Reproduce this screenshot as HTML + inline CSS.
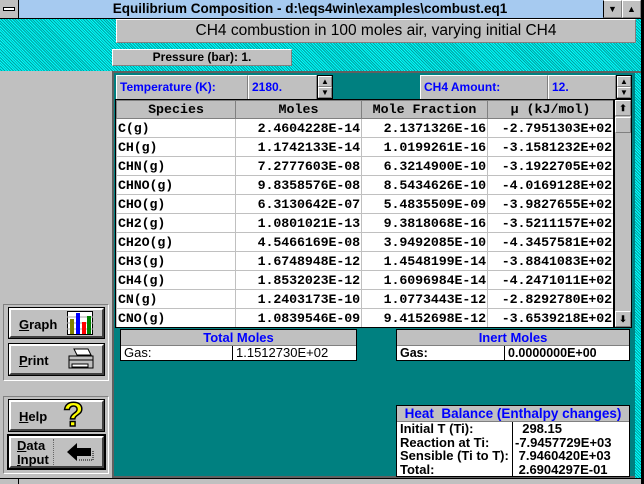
<!DOCTYPE html>
<html><head><style>
*{margin:0;padding:0;box-sizing:border-box}
body{width:644px;height:484px;overflow:hidden;background:#c0c0c0;position:relative;font-family:"Liberation Sans",sans-serif;font-weight:bold;font-size:12px}
.a{position:absolute}
.dither{background-color:#00c0c0;background-image:repeating-linear-gradient(45deg,#00ffff 0 1px,#00a0a0 1px 2px)}
.box{background:#c0c0c0;border:1px solid #fff;border-right-color:#808080;border-bottom-color:#808080}
.lbl{color:#0000ff;font-size:12px;line-height:23px;padding-left:3px}
.spin{background:#c0c0c0;border:1px solid #000}
.spin div{height:11px;border:1px solid #fff;border-right-color:#808080;border-bottom-color:#808080;font-size:8px;text-align:center;line-height:9px}
table{border-collapse:collapse;font-family:"Liberation Mono",monospace;font-size:13.3px;font-weight:bold}
td{height:19px;border:1px solid #c0c0c0;background:#fff;padding:0 1px;white-space:nowrap;letter-spacing:-0.1px}
th{height:18px;background:#c0c0c0;border:1px solid #808080;font-weight:bold}
td.r{text-align:right}
.hdr{background:#c0c0c0;color:#0000ff;text-align:center;height:16px;line-height:16px;border-bottom:1px solid #808080}
.btn{background:#c0c0c0;border:2px solid;border-color:#fff #404040 #404040 #fff;outline:1px solid #000}
.grp{border:1px solid;border-color:#808080 #fff #fff #808080;background:#c0c0c0}
</style></head><body>
<div class="a" style="left:0;top:0;width:644px;height:19px;background:#a6caf0;border-bottom:1px solid #000"></div>
<div class="a" style="left:0;top:0;width:19px;height:18px;background:#c0c0c0;border-right:1px solid #000"><div style="margin:7px 3px;height:4px;border:1px solid #000;background:#fff"></div></div>
<div class="a" style="left:0;top:1px;width:620px;text-align:center;font-size:13.5px;line-height:16px">Equilibrium Composition - d:\eqs4win\examples\combust.eq1</div>
<div class="a box" style="left:603px;top:0;width:19px;height:18px;font-size:9px;text-align:center;line-height:16px;border-left:1px solid #000">▼</div>
<div class="a box" style="left:622px;top:0;width:19px;height:18px;font-size:9px;text-align:center;line-height:16px">▲</div>
<div class="a" style="left:641px;top:0;width:3px;height:484px;background:#000"></div>
<div class="a dither" style="left:0;top:19px;width:641px;height:52px"></div>
<div class="a box" style="left:116px;top:19px;width:520px;height:24px;font-size:15.5px;text-align:center;line-height:22px;font-weight:normal">CH4 combustion in 100 moles air, varying initial CH4</div>
<div class="a box" style="left:112px;top:49px;width:180px;height:17px;text-align:center;line-height:15px">Pressure (bar): 1.</div>
<div class="a" style="left:112px;top:71px;width:529px;height:407px;background:#008080;border:2px solid #606060;border-right:none"></div>
<div class="a dither" style="left:635px;top:73px;width:6px;height:405px"></div>
<div class="a box lbl" style="left:116px;top:75px;width:132px;height:25px">Temperature (K):</div>
<div class="a box lbl" style="left:248px;top:75px;width:69px;height:25px">2180.</div>
<div class="a spin" style="left:317px;top:75px;width:16px;height:24px"><div>▲</div><div>▼</div></div>
<div class="a box lbl" style="left:420px;top:75px;width:128px;height:25px">CH4 Amount:</div>
<div class="a box lbl" style="left:548px;top:75px;width:68px;height:25px">12.</div>
<div class="a spin" style="left:616px;top:75px;width:16px;height:24px"><div>▲</div><div>▼</div></div>
<div class="a" style="left:115px;top:99px;width:499px;height:229px;background:#fff;border:1px solid #000;overflow:hidden">
<table style="width:498px;table-layout:fixed">
<tr><th style="width:119px">Species</th><th style="width:126px">Moles</th><th style="width:126px">Mole Fraction</th><th>μ (kJ/mol)</th></tr>
<tr><td>C(g)</td><td class="r">2.4604228E-14</td><td class="r">2.1371326E-16</td><td class="r">-2.7951303E+02</td></tr>
<tr><td>CH(g)</td><td class="r">1.1742133E-14</td><td class="r">1.0199261E-16</td><td class="r">-3.1581232E+02</td></tr>
<tr><td>CHN(g)</td><td class="r">7.2777603E-08</td><td class="r">6.3214900E-10</td><td class="r">-3.1922705E+02</td></tr>
<tr><td>CHNO(g)</td><td class="r">9.8358576E-08</td><td class="r">8.5434626E-10</td><td class="r">-4.0169128E+02</td></tr>
<tr><td>CHO(g)</td><td class="r">6.3130642E-07</td><td class="r">5.4835509E-09</td><td class="r">-3.9827655E+02</td></tr>
<tr><td>CH2(g)</td><td class="r">1.0801021E-13</td><td class="r">9.3818068E-16</td><td class="r">-3.5211157E+02</td></tr>
<tr><td>CH2O(g)</td><td class="r">4.5466169E-08</td><td class="r">3.9492085E-10</td><td class="r">-4.3457581E+02</td></tr>
<tr><td>CH3(g)</td><td class="r">1.6748948E-12</td><td class="r">1.4548199E-14</td><td class="r">-3.8841083E+02</td></tr>
<tr><td>CH4(g)</td><td class="r">1.8532023E-12</td><td class="r">1.6096984E-14</td><td class="r">-4.2471011E+02</td></tr>
<tr><td>CN(g)</td><td class="r">1.2403173E-10</td><td class="r">1.0773443E-12</td><td class="r">-2.8292780E+02</td></tr>
<tr><td>CNO(g)</td><td class="r">1.0839546E-09</td><td class="r">9.4152698E-12</td><td class="r">-3.6539218E+02</td></tr>
</table></div>
<div class="a" style="left:614px;top:99px;width:18px;height:229px;background:#c0c0c0;border:1px solid #000"></div>
<div class="a box" style="left:615px;top:100px;width:16px;height:16px;font-size:9px;text-align:center;line-height:14px">⬆</div>
<div class="a box" style="left:615px;top:117px;width:16px;height:16px"></div>
<div class="a box" style="left:615px;top:311px;width:16px;height:16px;font-size:9px;text-align:center;line-height:14px">⬇</div>
<div class="a" style="left:120px;top:329px;width:237px;height:32px;border:1px solid #000;background:#fff">
<div class="hdr" style="font-size:13px">Total Moles</div>
<div style="display:flex;font-size:13px;line-height:14px;font-weight:normal"><div style="width:112px;border-right:1px solid #000;padding-left:3px">Gas:</div><div style="padding-left:3px">1.1512730E+02</div></div></div>
<div class="a" style="left:396px;top:329px;width:234px;height:32px;border:1px solid #000;background:#fff">
<div class="hdr" style="font-size:13px">Inert Moles</div>
<div style="display:flex;font-size:12.5px;line-height:14px"><div style="width:108px;border-right:1px solid #000;padding-left:3px">Gas:</div><div style="padding-left:3px">0.0000000E+00</div></div></div>
<div class="a" style="left:396px;top:405px;width:234px;height:72px;border:1px solid #000;background:#fff">
<div class="hdr" style="font-size:13.5px">Heat &nbsp;Balance (Enthalpy changes)</div>
<div style="display:flex;font-size:13px;line-height:13.5px"><div style="width:116px;border-right:1px solid #000;padding-left:3px;height:54px">Initial T (Ti):<br>Reaction at Ti:<br>Sensible (Ti to T):<br>Total:</div><div style="padding-left:2px">&nbsp;&nbsp;298.15<br>-7.9457729E+03<br>&nbsp;7.9460420E+03<br>&nbsp;2.6904297E-01</div></div></div>
<div class="a grp" style="left:3px;top:304px;width:106px;height:77px"></div>
<div class="a btn" style="left:9px;top:308px;width:95px;height:30px"><span class="a" style="left:8px;top:7px;font-size:13px"><u>G</u>raph</span>
<svg class="a" style="left:56px;top:1px" width="26" height="24"><rect x="0.5" y="0.5" width="25" height="23" fill="#fff" stroke="#000"/><path d="M0 6H26M0 12H26M0 18H26" stroke="#aaa"/><rect x="3" y="8" width="4" height="15" fill="#808000"/><rect x="9" y="2" width="4" height="21" fill="#0000ff"/><rect x="15" y="11" width="4" height="12" fill="#ff0000"/><rect x="20" y="5" width="4" height="18" fill="#008000"/></svg></div>
<div class="a btn" style="left:9px;top:344px;width:95px;height:31px"><span class="a" style="left:8px;top:7px;font-size:13px"><u>P</u>rint</span>
<svg class="a" style="left:56px;top:2px" width="28" height="24"><path d="M7 1h14l3 6H10z" fill="#fff" stroke="#000"/><rect x="2" y="8" width="24" height="12" fill="#c0c0c0" stroke="#000"/><path d="M2 12h24" stroke="#000"/><rect x="5" y="16" width="16" height="3" fill="#fff" stroke="#000"/></svg></div>
<div class="a grp" style="left:3px;top:396px;width:106px;height:78px"></div>
<div class="a btn" style="left:9px;top:400px;width:95px;height:31px"><span class="a" style="left:8px;top:7px;font-size:13px"><u>H</u>elp</span>
<span class="a" style="left:52px;top:-6px;font-size:34px;color:#ffff00;-webkit-text-stroke:1.5px #000;font-family:'Liberation Sans'">?</span></div>
<div class="a btn" style="left:9px;top:436px;width:95px;height:32px;outline:2px solid #000"><span class="a" style="left:6px;top:1px;font-size:13px;line-height:14px"><u>D</u>ata<br><u>I</u>nput</span>
<div class="a" style="left:42px;top:1px;height:26px;border-left:1px dotted #666"></div>
<svg class="a" style="left:54px;top:2px" width="30" height="24"><path d="M2 12L12 3v5h14v8H12v5z" fill="#000"/><path d="M14 20h14V10" stroke="#000" fill="none" stroke-dasharray="1 1"/></svg></div>
<div class="a" style="left:0;top:478px;width:641px;height:6px;background:#c0c0c0;border-top:1px solid #000"></div>
<div class="a" style="left:18px;top:479px;width:1px;height:5px;background:#000"></div>
</body></html>
